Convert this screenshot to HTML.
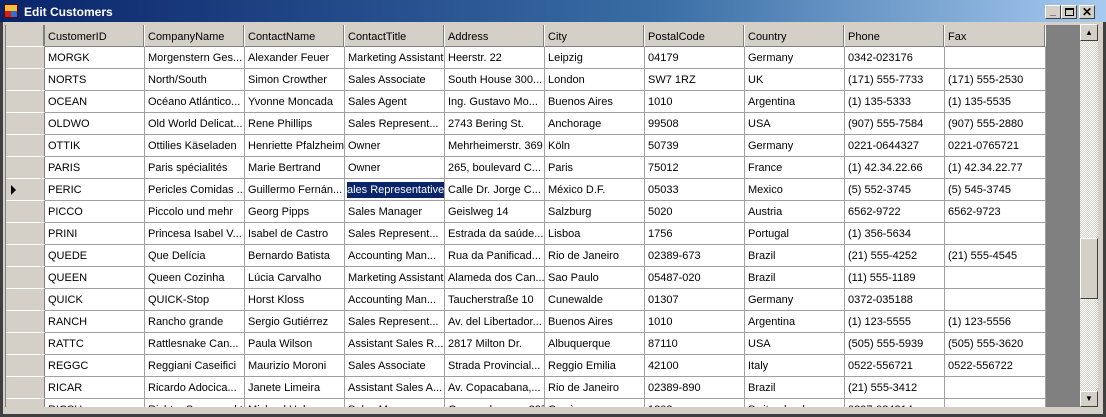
<!DOCTYPE html><html><head><style>
*{margin:0;padding:0;box-sizing:border-box}
body{width:1106px;height:417px;overflow:hidden;background:#d4d0c8;font-family:"Liberation Sans",Arial,sans-serif;font-size:11px;position:relative}
.abs{position:absolute}
#title{left:0;top:0;width:1106px;height:22px;background:linear-gradient(90deg,#0a246a,#3a6ea5 60%,#a6caf0);color:#fff;font-weight:bold;font-size:12px;line-height:24px;padding-left:24px}
#frame{left:0;top:22px;width:1106px;height:395px;background:#d4d0c8;border:3px solid #404040;border-top:none}
#grid{left:5px;top:25px;width:1075px;height:382px;background:#808080;overflow:hidden}
.row{position:absolute;left:0;height:22px;white-space:nowrap}
.c{position:absolute;top:0;height:22px;line-height:23px;padding-left:3px;background:#fff;border-right:1px solid #a0a0a0;border-bottom:1px solid #a0a0a0;overflow:hidden;color:#000}
.h .c{background:#d4d0c8;border-right:1px solid #fff;box-shadow:inset -1px 0 #808080;border-bottom:1px solid #808080;line-height:24px}
.rh{background:#d4d0c8 !important;border-right:1px solid #808080 !important;border-bottom:1px solid #fff !important}
#sb{left:1080px;top:24px;width:18px;height:383px;background:repeating-conic-gradient(#d4d0c8 0 25%,#fff 0 50%) 0 0/2px 2px}
.btn{position:absolute;left:0;width:18px;background:#d4d0c8;border:1px solid;border-color:#fff #404040 #404040 #fff}
</style></head><body>
<div id="frame" class="abs"></div>
<div id="title" class="abs">Edit Customers</div>
<div class="abs" style="left:4px;top:4px;width:14px;height:14px;background:#f0c040;border:1px solid #600"><div style="position:absolute;left:0;top:6px;width:6px;height:6px;background:#d02020"></div><div style="position:absolute;left:6px;top:6px;width:6px;height:6px;background:#3070d0"></div></div>
<div class="abs btn" style="left:1045px;top:5px;width:16px;height:14px;font-size:10px;font-weight:bold;text-align:center;line-height:12px">_</div>
<div class="abs btn" style="left:1061px;top:5px;width:16px;height:14px"><div style="margin:2px 3px;width:9px;height:8px;border:1px solid #000;border-top-width:2px"></div></div>
<div class="abs btn" style="left:1079px;top:5px;width:16px;height:14px;font-size:12px;font-weight:bold;text-align:center;line-height:12px">✕</div>
<div id="grid" class="abs">
<div class="row h" style="top:0"><div class="c rh" style="left:1px;width:39px;border-right:1px solid #808080"></div><div class="c" style="left:40px;width:100px">CustomerID</div><div class="c" style="left:140px;width:100px">CompanyName</div><div class="c" style="left:240px;width:100px">ContactName</div><div class="c" style="left:340px;width:100px">ContactTitle</div><div class="c" style="left:440px;width:100px">Address</div><div class="c" style="left:540px;width:100px">City</div><div class="c" style="left:640px;width:100px">PostalCode</div><div class="c" style="left:740px;width:100px">Country</div><div class="c" style="left:840px;width:100px">Phone</div><div class="c" style="left:940px;width:101px">Fax</div></div>
<div id="rows"></div>
</div>
<div id="sb" class="abs"><div class="btn" style="top:0;height:17px;font-size:8px;text-align:center;line-height:15px">▲</div><div class="btn" style="top:214px;height:61px"></div><div class="btn" style="top:367px;height:16px;font-size:8px;text-align:center;line-height:14px">▼</div></div>
<script>
var d=[["MORGK","Morgenstern Ges...","Alexander Feuer","Marketing Assistant","Heerstr. 22","Leipzig","04179","Germany","0342-023176",""],
["NORTS","North/South","Simon Crowther","Sales Associate","South House 300...","London","SW7 1RZ","UK","(171) 555-7733","(171) 555-2530"],
["OCEAN","Océano Atlántico...","Yvonne Moncada","Sales Agent","Ing. Gustavo Mo...","Buenos Aires","1010","Argentina","(1) 135-5333","(1) 135-5535"],
["OLDWO","Old World Delicat...","Rene Phillips","Sales Represent...","2743 Bering St.","Anchorage","99508","USA","(907) 555-7584","(907) 555-2880"],
["OTTIK","Ottilies Käseladen","Henriette Pfalzheim","Owner","Mehrheimerstr. 369","Köln","50739","Germany","0221-0644327","0221-0765721"],
["PARIS","Paris spécialités","Marie Bertrand","Owner","265, boulevard C...","Paris","75012","France","(1) 42.34.22.66","(1) 42.34.22.77"],
["PERIC","Pericles Comidas ...","Guillermo Fernán...","ales Representative","Calle Dr. Jorge C...","México D.F.","05033","Mexico","(5) 552-3745","(5) 545-3745"],
["PICCO","Piccolo und mehr","Georg Pipps","Sales Manager","Geislweg 14","Salzburg","5020","Austria","6562-9722","6562-9723"],
["PRINI","Princesa Isabel V...","Isabel de Castro","Sales Represent...","Estrada da saúde...","Lisboa","1756","Portugal","(1) 356-5634",""],
["QUEDE","Que Delícia","Bernardo Batista","Accounting Man...","Rua da Panificad...","Rio de Janeiro","02389-673","Brazil","(21) 555-4252","(21) 555-4545"],
["QUEEN","Queen Cozinha","Lúcia Carvalho","Marketing Assistant","Alameda dos Can...","Sao Paulo","05487-020","Brazil","(11) 555-1189",""],
["QUICK","QUICK-Stop","Horst Kloss","Accounting Man...","Taucherstraße 10","Cunewalde","01307","Germany","0372-035188",""],
["RANCH","Rancho grande","Sergio Gutiérrez","Sales Represent...","Av. del Libertador...","Buenos Aires","1010","Argentina","(1) 123-5555","(1) 123-5556"],
["RATTC","Rattlesnake Can...","Paula Wilson","Assistant Sales R...","2817 Milton Dr.","Albuquerque","87110","USA","(505) 555-5939","(505) 555-3620"],
["REGGC","Reggiani Caseifici","Maurizio Moroni","Sales Associate","Strada Provincial...","Reggio Emilia","42100","Italy","0522-556721","0522-556722"],
["RICAR","Ricardo Adocica...","Janete Limeira","Assistant Sales A...","Av. Copacabana,...","Rio de Janeiro","02389-890","Brazil","(21) 555-3412",""],
["RICSH","Richter Supermarkt","Michael Holz","Sales Manager","Grenzacherweg 237","Genève","1203","Switzerland","0897-034214",""]];
var h="";d.forEach(function(r,i){h+='<div class="row" style="top:'+(22+22*i)+'px"><div class="c rh" style="left:1px;width:39px;padding:0">'+(i==6?'<span style="position:absolute;left:5px;top:6px;width:0;height:0;border-left:5px solid #000;border-top:5px solid transparent;border-bottom:5px solid transparent"></span>':'')+'</div>';
r.forEach(function(v,j){var sel=(i==6&&j==3);h+='<div class="c" style="left:'+(40+100*j)+'px;width:'+(j==9?101:100)+'px">'+(sel?'<span style="background:#0a246a;color:#fff;margin-left:-1px;padding:2px 0">'+v+'</span>':v)+'</div>';});h+='</div>';});
document.getElementById('rows').innerHTML=h;
</script>
</body></html>
